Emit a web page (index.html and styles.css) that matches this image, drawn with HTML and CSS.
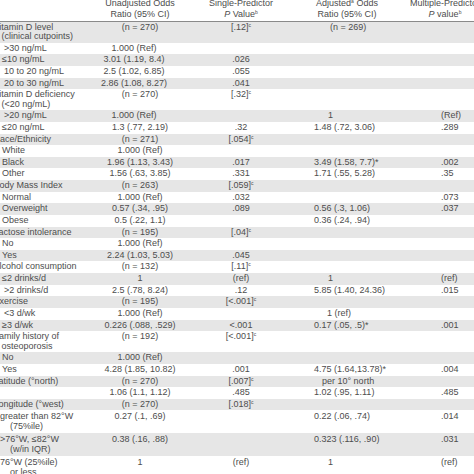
FILE: index.html
```html
<!DOCTYPE html>
<html>
<head>
<meta charset="utf-8">
<link rel="stylesheet" href="styles.css">
</head>
<body>
<table class="t">
<colgroup><col class="c1"><col class="c2"><col class="c3"><col class="c4"><col class="c5"></colgroup>
<thead>
<tr><th></th><th>Unadjusted Odds<br>Ratio (95% CI)</th><th>Single-Predictor<br><i>P</i> Value<sup>b</sup></th><th>Adjusted<sup>a</sup> Odds<br>Ratio (95% CI)</th><th class="hm">Multiple-Predictor<br><i>P</i> value<sup>b</sup></th></tr>
</thead>
<tbody>
<tr class="g"><td class="l">Vitamin D level<br>(clinical cutpoints)</td><td class="u">(n = 270)</td><td class="p">[.12]<sup>c</sup></td><td class="a an">(n = 269)</td><td class="m"></td></tr>
<tr><td class="s s2">&gt;30 ng/mL</td><td class="u sh">1.000 (Ref)</td><td class="p"></td><td class="a"></td><td class="m"></td></tr>
<tr class="g"><td class="s">≤10 ng/mL</td><td class="u sh">3.01 (1.19, 8.4)</td><td class="p">.026</td><td class="a"></td><td class="m"></td></tr>
<tr><td class="s s2">10 to 20 ng/mL</td><td class="u sh">2.5 (1.02, 6.85)</td><td class="p">.055</td><td class="a"></td><td class="m"></td></tr>
<tr class="g"><td class="s s2">20 to 30 ng/mL</td><td class="u sh">2.86 (1.08, 8.27)</td><td class="p">.041</td><td class="a"></td><td class="m"></td></tr>
<tr><td class="l">Vitamin D deficiency<br>(&lt;20 ng/mL)</td><td class="u">(n = 270)</td><td class="p">[.32]<sup>c</sup></td><td class="a"></td><td class="m"></td></tr>
<tr class="g"><td class="s s2">&gt;20 ng/mL</td><td class="u sh">1.000 (Ref)</td><td class="p"></td><td class="a a1">1</td><td class="m">(Ref)</td></tr>
<tr><td class="s">≤20 ng/mL</td><td class="u">1.3 (.77, 2.19)</td><td class="p">.32</td><td class="a">1.48 (.72, 3.06)</td><td class="m">.289</td></tr>
<tr class="g"><td class="l">Race/Ethnicity</td><td class="u">(n = 271)</td><td class="p">[.054]<sup>c</sup></td><td class="a"></td><td class="m"></td></tr>
<tr><td class="s">White</td><td class="u">1.000 (Ref)</td><td class="p"></td><td class="a"></td><td class="m"></td></tr>
<tr class="g"><td class="s">Black</td><td class="u">1.96 (1.13, 3.43)</td><td class="p">.017</td><td class="a">3.49 (1.58, 7.7)*</td><td class="m">.002</td></tr>
<tr><td class="s">Other</td><td class="u">1.56 (.63, 3.85)</td><td class="p">.331</td><td class="a">1.71 (.55, 5.28)</td><td class="m">.35</td></tr>
<tr class="g"><td class="l">Body Mass Index</td><td class="u">(n = 263)</td><td class="p">[.059]<sup>c</sup></td><td class="a"></td><td class="m"></td></tr>
<tr><td class="s">Normal</td><td class="u">1.000 (Ref)</td><td class="p">.032</td><td class="a"></td><td class="m">.073</td></tr>
<tr class="g"><td class="s">Overweight</td><td class="u">0.57 (.34, .95)</td><td class="p">.089</td><td class="a">0.56 (.3, 1.06)</td><td class="m">.037</td></tr>
<tr><td class="s">Obese</td><td class="u">0.5 (.22, 1.1)</td><td class="p"></td><td class="a">0.36 (.24, .94)</td><td class="m"></td></tr>
<tr class="g"><td class="l">Lactose intolerance</td><td class="u">(n = 195)</td><td class="p">[.04]<sup>c</sup></td><td class="a"></td><td class="m"></td></tr>
<tr><td class="s">No</td><td class="u">1.000 (Ref)</td><td class="p"></td><td class="a"></td><td class="m"></td></tr>
<tr class="g"><td class="s">Yes</td><td class="u">2.24 (1.03, 5.03)</td><td class="p">.045</td><td class="a"></td><td class="m"></td></tr>
<tr><td class="l">Alcohol consumption</td><td class="u">(n = 132)</td><td class="p">[.11]<sup>c</sup></td><td class="a"></td><td class="m"></td></tr>
<tr class="g"><td class="s">≤2 drinks/d</td><td class="u">1</td><td class="p">(ref)</td><td class="a a1">1</td><td class="m">(ref)</td></tr>
<tr><td class="s s2">&gt;2 drinks/d</td><td class="u">2.5 (.78, 8.24)</td><td class="p">.12</td><td class="a">5.85 (1.40, 24.36)</td><td class="m">.015</td></tr>
<tr class="g"><td class="l">Exercise</td><td class="u">(n = 195)</td><td class="p">[&lt;.001]<sup>c</sup></td><td class="a"></td><td class="m"></td></tr>
<tr><td class="s s2">&lt;3 d/wk</td><td class="u">1.000 (Ref)</td><td class="p"></td><td class="a ar">1 (ref)</td><td class="m"></td></tr>
<tr class="g"><td class="s">≥3 d/wk</td><td class="u">0.226 (.088, .529)</td><td class="p">&lt;.001</td><td class="a">0.17 (.05, .5)*</td><td class="m">.001</td></tr>
<tr><td class="l">Family history of<br>osteoporosis</td><td class="u">(n = 192)</td><td class="p">[&lt;.001]<sup>c</sup></td><td class="a"></td><td class="m"></td></tr>
<tr class="g"><td class="s">No</td><td class="u">1.000 (Ref)</td><td class="p"></td><td class="a"></td><td class="m"></td></tr>
<tr><td class="s">Yes</td><td class="u">4.28 (1.85, 10.82)</td><td class="p">.001</td><td class="a">4.75 (1.64,13.78)*</td><td class="m">.004</td></tr>
<tr class="g"><td class="l">Latitude (°north)</td><td class="u">(n = 270)</td><td class="p">[.007]<sup>c</sup></td><td class="a apn">per 10° north</td><td class="m"></td></tr>
<tr><td class="l"></td><td class="u">1.06 (1.1, 1.12)</td><td class="p">.485</td><td class="a">1.02 (.95, 1.11)</td><td class="m">.485</td></tr>
<tr class="g"><td class="l">Longitude (°west)</td><td class="u">(n = 270)</td><td class="p">[.018]<sup>c</sup></td><td class="a"></td><td class="m"></td></tr>
<tr class="tall"><td class="lg">greater than 82°W<br>(75%ile)</td><td class="u">0.27 (.1, .69)</td><td class="p"></td><td class="a">0.22 (.06, .74)</td><td class="m">.014</td></tr>
<tr class="g tall"><td class="lg">&gt;76°W, ≤82°W<br>(w/in IQR)</td><td class="u">0.38 (.16, .88)</td><td class="p"></td><td class="a">0.323 (.116, .90)</td><td class="m">.031</td></tr>
<tr class="tall"><td class="lg">76°W (25%ile)<br>or less</td><td class="u">1</td><td class="p">(ref)</td><td class="a a1">1</td><td class="m">(ref)</td></tr>
</tbody>
</table>
</body>
</html>
```
FILE: styles.css
```css
html, body {
  margin: 0;
  padding: 0;
  overflow: hidden;
  background: #ffffff;
}
body {
  width: 474px;
  height: 474px;
  font-family: "Liberation Sans", Arial, sans-serif;
  font-size: 9px;
  color: #4d4d4d;
}
.t {
  border-collapse: collapse;
  table-layout: fixed;
  width: 509px;
  margin: -2px 0 0 -9px;
}
.c1 { width: 101px; }
.c2 { width: 96px; }
.c3 { width: 106px; }
.c4 { width: 106px; }
.c5 { width: 100px; }
th {
  font-weight: normal;
  line-height: 10.5px;
  padding: 0 0 1.5px;
  border-bottom: 1px solid #8a8a8a;
  text-align: center;
  vertical-align: bottom;
  white-space: nowrap;
}
th.hm { padding-right: 10px; }
sup {
  font-size: 5px;
  line-height: 0;
  vertical-align: 3px;
}
td {
  line-height: 9.5px;
  padding: 1.07px 0;
  vertical-align: top;
  white-space: nowrap;
}
tr.g td { background: #e6e6e6; }
tr.tall td { padding-top: 2px; padding-bottom: 2px; }
td.l { padding-left: 10.5px; text-indent: -8px; }
td.s { padding-left: 11px; }
td.s2 { padding-left: 13px; }
td.lg { padding-left: 19px; text-indent: -10px; }
td.u { text-align: center; }
td.sh { padding-right: 12px; }
td.p { text-align: center; }
td.a { padding-left: 20px; }
td.a1 { padding-left: 34px; }
td.an { padding-left: 36px; }
td.ar { padding-left: 33px; }
td.apn { padding-left: 28px; }
td.m { padding-left: 41px; }
```
